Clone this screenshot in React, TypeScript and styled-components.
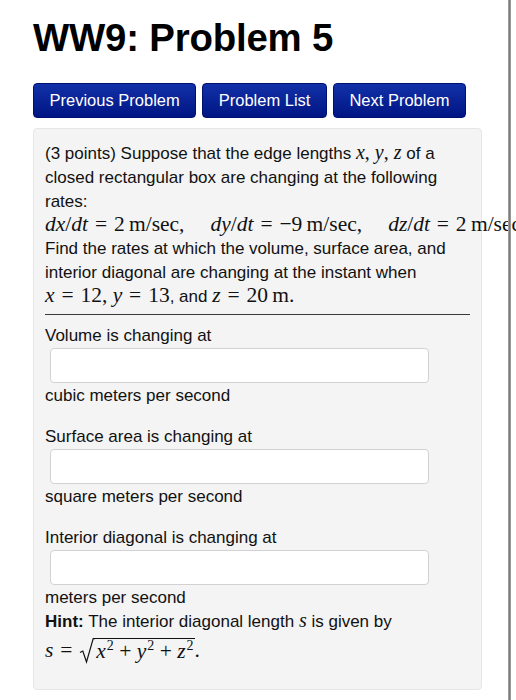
import styled, { createGlobalStyle } from 'styled-components';

const GlobalStyle = createGlobalStyle`
  html, body {
    margin: 0;
    padding: 0;
    background: #fff;
    overflow: hidden;
  }
  body {
    font-family: "Liberation Sans", Arial, sans-serif;
    color: #111;
  }
`;

const FIELDS = [
  { label: 'Volume is changing at', unit: 'cubic meters per second' },
  { label: 'Surface area is changing at', unit: 'square meters per second' },
  { label: 'Interior diagonal is changing at', unit: 'meters per second' },
];

const NAV = ['Previous Problem', 'Problem List', 'Next Problem'];

const App = () => {
  return (
    <>
      <GlobalStyle />
      <Page>
        <Main>
          <Title>WW9: Problem 5</Title>
          <Nav>
            {NAV.map((label) => (
              <NavButton key={label}>{label}</NavButton>
            ))}
          </Nav>
          <Panel>
            <Text>
              (3 points) Suppose that the edge lengths{' '}
              <M $size={20}>
                <V>x</V>, <V>y</V>, <V>z</V>
              </M>{' '}
              of a closed rectangular box are changing at the following rates:
            </Text>
            <MathLine>
              <M>
                <V>dx</V>/<V>dt</V>
                <Op>=</Op>2&thinsp;m/sec,
              </M>
              <Quad />
              <M>
                <V>dy</V>/<V>dt</V>
                <Op>=</Op>−9&thinsp;m/sec,
              </M>
              <Quad />
              <M>
                <V>dz</V>/<V>dt</V>
                <Op>=</Op>2&thinsp;m/sec
              </M>
            </MathLine>
            <Text>
              Find the rates at which the volume, surface area, and interior diagonal are changing at the
              instant when
              <br />
              <M>
                <V>x</V>
                <Op>=</Op>12, <V>y</V>
                <Op>=</Op>13
              </M>
              , and{' '}
              <M>
                <V>z</V>
                <Op>=</Op>20&thinsp;m.
              </M>
            </Text>
            <Rule />
            {FIELDS.map((f, i) => (
              <Field key={f.label} $last={i === FIELDS.length - 1}>
                <Text>{f.label}</Text>
                <AnswerInput type="text" />
                <Unit>{f.unit}</Unit>
              </Field>
            ))}
            <Text>
              <b>Hint:</b> The interior diagonal length{' '}
              <M $size={20}>
                <V>s</V>
              </M>{' '}
              is given by
            </Text>
            <Formula>
              <M>
                <V>s</V>
                <Op>=</Op>
                <Radical>
                  <svg width="16" height="26" viewBox="0 0 16 26">
                    <path d="M1 14.5 L3.8 13 L7.5 24 L14.2 0.6 L16 0.6" fill="none" stroke="#111" strokeWidth="1.2" />
                  </svg>
                  <Radicand>
                    <V>x</V>
                    <Sup>2</Sup>
                    <Plus>+</Plus>
                    <V>y</V>
                    <Sup>2</Sup>
                    <Plus>+</Plus>
                    <V>z</V>
                    <Sup>2</Sup>
                  </Radicand>
                </Radical>
                .
              </M>
            </Formula>
          </Panel>
        </Main>
        <Edge />
      </Page>
    </>
  );
};

export default App;

const Page = styled.div`
  display: flex;
  width: 516px;
  height: 700px;
`;

const Main = styled.div`
  width: 508px;
  flex: none;
  padding-left: 33px;
  box-sizing: border-box;
`;

const Edge = styled.div`
  width: 3px;
  height: 700px;
  flex: none;
  background: linear-gradient(to right, #b0b0b0, #7a7a7a, #a8a8a8);
  position: relative;
  z-index: 1;
`;

const Title = styled.h1`
  margin: 0;
  padding-top: 17px;
  font-size: 38.4px;
  line-height: 42px;
  font-weight: 700;
  color: #000;
  letter-spacing: -0.2px;
`;

const Nav = styled.div`
  display: flex;
  gap: 6px;
  margin-top: 24px;
`;

const NavButton = styled.button`
  height: 35px;
  padding: 0 15.5px;
  border: 1px solid #00106e;
  border-radius: 4px;
  background: linear-gradient(to bottom, #1231a8, #001583);
  color: #fff;
  font-family: "Liberation Sans", Arial, sans-serif;
  font-size: 16.5px;
  cursor: pointer;
`;

const Panel = styled.div`
  margin-top: 10px;
  width: 449px;
  box-sizing: border-box;
  padding: 13px 11px 25px 11px;
  background: #f4f4f4;
  border: 1px solid #e6e6e6;
  border-radius: 4px;
  font-size: 17px;
  line-height: 24px;
`;

const Text = styled.div`
  font-size: 17px;
  line-height: 24px;
  color: #111;
`;

const Unit = styled(Text)`
  margin-top: 1px;
`;

const M = styled.span<{ $size?: number }>`
  font-family: "Liberation Serif", "Times New Roman", serif;
  font-size: ${(p) => p.$size ?? 21.5}px;
  line-height: 1;
  white-space: nowrap;
`;

const V = styled.i`
  font-style: italic;
`;

const Op = styled.span`
  margin: 0 0.32em;
`;

const Quad = styled.span`
  display: inline-block;
  width: 26px;
`;

const MathLine = styled.div`
  white-space: nowrap;
  line-height: 23px;
`;

const Rule = styled.hr`
  margin: 5px 0 9px;
  border: none;
  border-top: 1.5px solid #3a3a3a;
`;

const Field = styled.div<{ $last?: boolean }>`
  margin-bottom: ${(p) => (p.$last ? '0' : '17px')};
`;

const AnswerInput = styled.input`
  display: block;
  margin-left: 5px;
  width: 379px;
  height: 35px;
  box-sizing: border-box;
  border: 1px solid #d2d2d2;
  border-radius: 4px;
  background: #fff;
  font-size: 17px;
  padding: 0 8px;
  outline: none;
`;

const Formula = styled.div`
  line-height: 26px;
  height: 26px;
  margin-top: 4px;
`;

const Radical = styled.span`
  display: inline-flex;
  align-items: flex-start;
  vertical-align: -7px;
`;

const Radicand = styled.span`
  border-top: 1.2px solid #111;
  line-height: 22px;
  padding: 1px 1px 0 1px;
`;

const Sup = styled.sup`
  font-size: 14px;
  vertical-align: 8px;
  line-height: 0;
  margin-left: 1px;
`;

const Plus = styled.span`
  margin: 0 0.25em;
`;
